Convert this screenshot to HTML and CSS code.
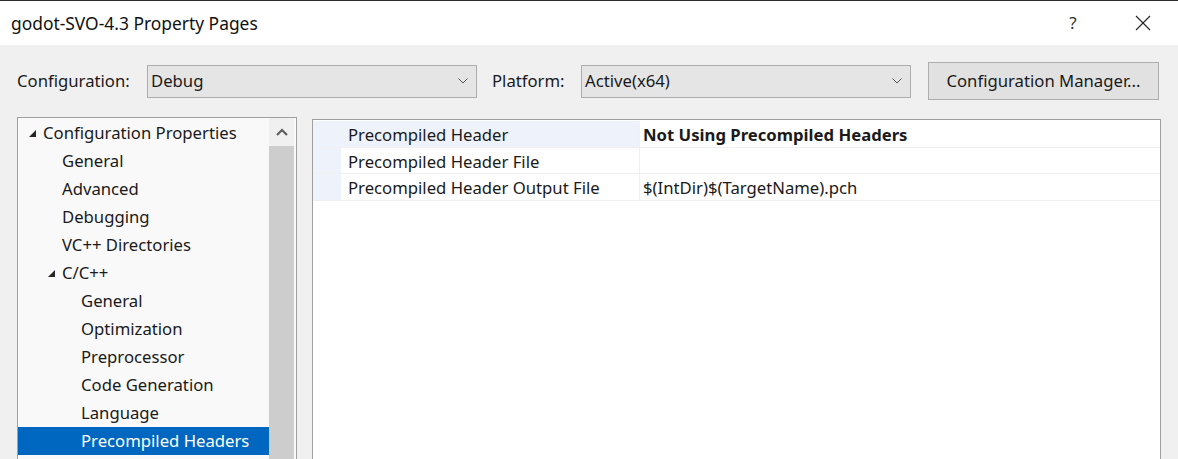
FILE: index.html
```html
<!DOCTYPE html>
<html lang="en">
<head>
  <meta charset="UTF-8">
  <title>godot-SVO-4.3 Property Pages</title>
  <link rel="stylesheet" href="styles.css">
</head>
<body>
  <div class="titlebar">
    <span class="title">godot-SVO-4.3 Property Pages</span>
    <span class="help">?</span>
    <span class="close">
      <svg width="16" height="16" viewBox="0 0 16 16"><path d="M1 1 L15 15 M15 1 L1 15" stroke="#222" stroke-width="1.1" fill="none"/></svg>
    </span>
  </div>

  <div class="toolbar">
    <label class="lbl lbl-config">Configuration:</label>
    <div class="combo">
      <span>Debug</span>
      <svg class="arrow" width="10" height="6" viewBox="0 0 10 6"><path d="M0.5 0.5 L5 5 L9.5 0.5" stroke="#555" fill="none"/></svg>
    </div>
    <label class="lbl lbl-platform">Platform:</label>
    <div class="combo">
      <span>Active(x64)</span>
      <svg class="arrow" width="10" height="6" viewBox="0 0 10 6"><path d="M0.5 0.5 L5 5 L9.5 0.5" stroke="#555" fill="none"/></svg>
    </div>
    <button class="btn">Configuration Manager...</button>
  </div>

  <div class="main">
    <div class="tree">
      <ul class="nodes">
        <li class="lv0"><i class="tri"></i>Configuration Properties</li>
        <li class="lv1">General</li>
        <li class="lv1">Advanced</li>
        <li class="lv1">Debugging</li>
        <li class="lv1">VC++ Directories</li>
        <li class="lv1"><i class="tri"></i>C/C++</li>
        <li class="lv2">General</li>
        <li class="lv2">Optimization</li>
        <li class="lv2">Preprocessor</li>
        <li class="lv2">Code Generation</li>
        <li class="lv2">Language</li>
        <li class="lv2 selected">Precompiled Headers</li>
      </ul>
      <div class="scrollbar">
        <div class="up">
          <svg width="12" height="8" viewBox="0 0 12 8"><path d="M1 7 L6 2 L11 7" stroke="#5f5f5f" stroke-width="2.2" fill="none"/></svg>
        </div>
        <div class="thumb"></div>
      </div>
    </div>

    <div class="grid">
      <div class="row current">
        <div class="gutter"></div>
        <div class="name">Precompiled Header</div>
        <div class="value bold">Not Using Precompiled Headers</div>
      </div>
      <div class="row">
        <div class="gutter"></div>
        <div class="name">Precompiled Header File</div>
        <div class="value"></div>
      </div>
      <div class="row">
        <div class="gutter"></div>
        <div class="name">Precompiled Header Output File</div>
        <div class="value">$(IntDir)$(TargetName).pch</div>
      </div>
    </div>
  </div>
</body>
</html>
```

FILE: styles.css
```css
html, body { margin: 0; padding: 0; height: 100%; overflow: hidden; }
body {
  background: #f0f0f0; color: #1a1a1a;
  font: 16.7px/1.3 "Noto Sans", "Open Sans", sans-serif;
}

/* title bar */
.titlebar {
  height: 44px; background: #fff; border-top: 1px solid #2b2b2b;
  display: flex; align-items: center; padding-left: 11px;
}
.title { font-size: 17.4px; color: #111; flex: 1; }
.help { width: 70px; text-align: center; font-size: 17px; color: #333; }
.close { width: 70px; display: flex; justify-content: center; }

/* toolbar */
.toolbar {
  display: flex; align-items: center;
  height: 38px; margin-top: 17px; padding-left: 17px;
}
.lbl { display: inline-block; }
.lbl-config { width: 130px; }
.lbl-platform { width: 89px; margin-left: 15px; }
.combo {
  box-sizing: border-box; width: 330px; height: 33px;
  background: #e5e5e5; border: 1px solid #adadad;
  display: flex; align-items: center; justify-content: space-between;
  padding: 0 8px 0 3px;
}
.btn {
  box-sizing: border-box; width: 231px; height: 38px; margin-left: 17px;
  background: #e1e1e1; border: 1px solid #adadad; color: #1a1a1a;
  font: inherit; padding: 0; cursor: pointer;
}

/* tree + grid */
.main { display: flex; align-items: flex-start; margin-top: 17px; padding-left: 17px; }
.tree {
  box-sizing: border-box; width: 280px; height: 360px;
  background: #f9f9f9; border: 1px solid #a0a0a0;
  display: flex;
}
.nodes { list-style: none; margin: 0; padding: 1px 0 0 0; flex: 1; }
.nodes li { height: 28px; line-height: 28px; white-space: nowrap; position: relative; }
.lv0 { padding-left: 25px; }
.lv1 { padding-left: 44px; }
.lv2 { padding-left: 63px; }
.tri {
  position: absolute; top: 11px; width: 7px; height: 7px;
  background: #262626; clip-path: polygon(100% 0, 100% 100%, 0 100%);
}
.lv0 .tri { left: 11px; }
.lv1 .tri { left: 30px; }
.nodes li.selected { background: #0067c0; color: #fff; }
.scrollbar { width: 25px; background: #f0f0f0; margin-right: 2px; }
.scrollbar .up { height: 28px; display: flex; justify-content: center; align-items: center; }
.scrollbar .thumb { background: #cdcdcd; height: 320px; }

.grid {
  box-sizing: border-box; width: 849px; height: 360px; margin-left: 15px; margin-top: 2px;
  background: #fff; border: 1px solid #a0a0a0; padding-top: 1px;
}
.row { display: flex; height: 27px; border-bottom: 1px solid #f0f0f0; box-sizing: border-box; }
.row:nth-child(2) { height: 26px; }
.gutter { width: 28px; background: #eef3fb; }
.name {
  width: 299px; padding: 2px 0 0 7px; box-sizing: border-box;
  line-height: 24px; white-space: nowrap; border-right: 1px solid #f0f0f0;
}
.row.current .name { background: #eef3fb; }
.value { flex: 1; padding: 2px 0 0 3px; line-height: 24px; white-space: nowrap; }
.bold { font-weight: bold; }
```
